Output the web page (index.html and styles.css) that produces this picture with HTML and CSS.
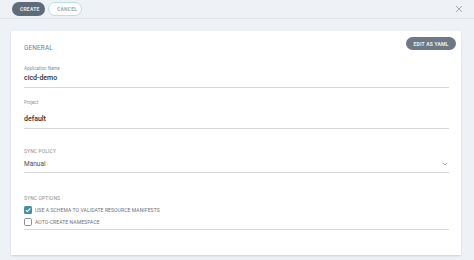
FILE: index.html
```html
<!DOCTYPE html>
<html lang="en">

<head>
    <meta charset="UTF-8">
    <meta name="viewport" content="width=device-width, initial-scale=1.0">
    <title>New Application</title>
    <link rel="stylesheet" href="styles.css">
</head>

<body>
    <div class="topbar">
        <button class="btn btn-dark">CREATE</button>
        <button class="btn btn-outline">CANCEL</button>
        <span class="close">
            <svg width="8" height="8" viewBox="0 0 8 8">
                <path d="M1 1 L7 7 M7 1 L1 7" stroke="#9aa1a8" stroke-width="0.9" fill="none" />
            </svg>
        </span>
    </div>

    <div class="content">
        <div class="card">
            <div class="card-head">
                <h2 class="section-title">GENERAL</h2>
                <button class="btn btn-yaml">EDIT AS YAML</button>
            </div>

            <div class="field field-name">
                <div class="field-label">Application Name</div>
                <div class="field-value">cicd-demo</div>
            </div>

            <div class="field field-project">
                <div class="field-label">Project</div>
                <div class="field-value">default</div>
            </div>

            <div class="field field-policy">
                <div class="field-label caps">SYNC POLICY</div>
                <div class="field-value select">
                    <span>Manual</span>
                    <svg width="6" height="4" viewBox="0 0 6 4">
                        <path d="M0.8 0.8 L3 3 L5.2 0.8" stroke="#8a9096" stroke-width="0.8" fill="none" />
                    </svg>
                </div>
            </div>

            <div class="field field-options">
                <div class="field-label caps">SYNC OPTIONS</div>
                <label class="check">
                    <span class="box checked">
                        <svg width="8" height="8" viewBox="0 0 8 8">
                            <path d="M1.8 4.2 L3.3 5.6 L6.3 2.4" stroke="#fff" stroke-width="1.1" fill="none" />
                        </svg>
                    </span>
                    USE A SCHEMA TO VALIDATE RESOURCE MANIFESTS
                </label>
                <label class="check">
                    <span class="box"></span>
                    AUTO-CREATE NAMESPACE
                </label>
            </div>
        </div>
    </div>
</body>

</html>
```

FILE: styles.css
```css
* {
    margin: 0;
    padding: 0;
    box-sizing: border-box;
}

body {
    font-family: Roboto, 'Liberation Sans', Arial, sans-serif;
    background: #eef1f5;
    color: #333;
    width: 474px;
    height: 260px;
    overflow: hidden;
}

.topbar {
    height: 19px;
    display: flex;
    align-items: center;
    gap: 3px;
    padding: 0 12px;
    border-bottom: 1px solid #dfe4e9;
}

.btn {
    font-family: inherit;
    border-radius: 8px;
    font-size: 5px;
    font-weight: 700;
    letter-spacing: 0.2px;
    cursor: pointer;
    height: 14px;
    padding: 0 8px;
}

.btn-dark {
    background: #5f6b78;
    color: #e3e7ea;
    border: none;
    width: 33px;
}

.btn-outline {
    background: #fff;
    color: #8fb2b6;
    border: 1px solid #bcdfe2;
    width: 34px;
}

.close {
    margin-left: auto;
    margin-right: -1px;
    display: flex;
}

.content {
    padding: 12px 13px 0 11px;
}

.card {
    background: #fff;
    height: 224px;
    padding: 6px 12px 0 13px;
    box-shadow: 0 1px 2px rgba(0, 0, 0, 0.12);
}

.card-head {
    display: flex;
    justify-content: space-between;
    align-items: flex-start;
    height: 22px;
    margin-right: -7px;
}

.section-title {
    font-size: 6.5px;
    font-weight: 400;
    color: #7a7f85;
    padding-top: 7px;
    letter-spacing: 0.1px;
}

.btn-yaml {
    background: #6d7984;
    color: #eef0f2;
    border: none;
    height: 13px;
    width: 50px;
    padding: 0;
    font-size: 5px;
}

.field {
    border-bottom: 1px solid #d6d9dc;
}

.field-label {
    font-size: 4.5px;
    line-height: 6px;
    color: #8b9096;
}

.field-label.caps {
    font-size: 5px;
    letter-spacing: 0.1px;
}

.field-value {
    font-size: 7px;
    line-height: 12px;
    color: #2b2f33;
    font-weight: 500;
}

.field-name {
    margin-top: 7px;
    padding-bottom: 3px;
}

.field-project {
    margin-top: 12px;
    padding-bottom: 3px;
}

.field-project .field-value {
    padding-top: 7px;
}

.field-policy {
    margin-top: 19px;
    padding-bottom: 2px;
}

.field-policy .field-value {
    padding-top: 4px;
    font-weight: 400;
    font-size: 6.5px;
    color: #4a4f55;
}

.select {
    display: flex;
    align-items: center;
    justify-content: space-between;
    padding-right: 1px;
}

.field-options {
    margin-top: 22px;
    padding-bottom: 1px;
}

.field-options .field-label {
    margin-bottom: 3px;
}

.check {
    display: flex;
    align-items: center;
    gap: 3px;
    height: 12px;
    font-size: 5px;
    color: #6b7178;
    letter-spacing: 0.1px;
}

.box {
    width: 8px;
    height: 8px;
    border: 1px solid #8a9096;
    border-radius: 1.5px;
    display: flex;
}

.box.checked {
    background: #3e91a6;
    border: none;
}
```
